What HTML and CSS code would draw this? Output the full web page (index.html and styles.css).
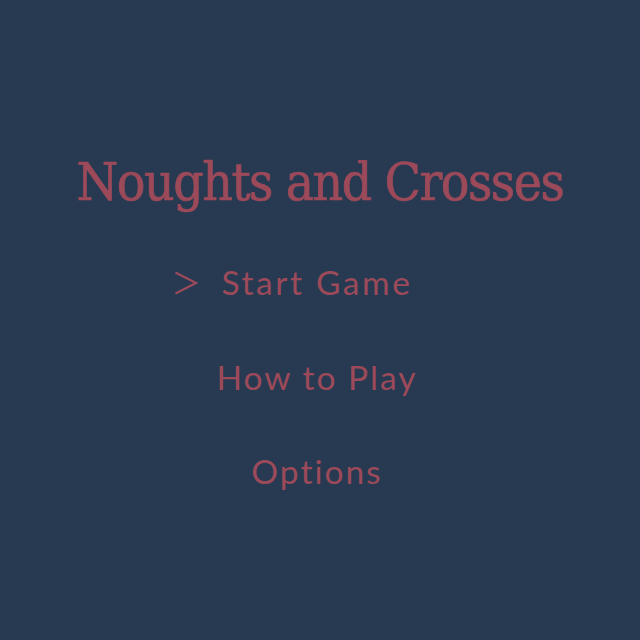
FILE: index.html
```html
<!DOCTYPE html>
<html lang="en">
<head>
    <meta charset="UTF-8">
    <meta name="viewport" content="width=device-width, initial-scale=1.0">
    <title>Noughts and Crosses</title>
    <link rel="stylesheet" href="styles.css">
</head>
<body>
    <div class="screen">
        <h1 class="title">Noughts and Crosses</h1>
        <ul class="menu">
            <li class="menu-item selected">
                <span class="cursor">
                    <svg width="24" height="24" viewBox="0 0 24 24">
                        <polyline points="1.5,1.5 22,12 1.5,22.5" fill="none" stroke="currentColor" stroke-width="2.2"/>
                    </svg>
                </span>Start Game
            </li>
            <li class="menu-item">How to Play</li>
            <li class="menu-item">Options</li>
        </ul>
    </div>
</body>
</html>
```

FILE: styles.css
```css
html, body {
    margin: 0;
    padding: 0;
}

body {
    background-color: #283a52;
    color: #9c4a5a;
    width: 640px;
    height: 640px;
    overflow: hidden;
}

.screen {
    display: flex;
    flex-direction: column;
    align-items: center;
    padding-top: 150px;
}

.title {
    font-family: "DejaVu Serif Condensed", "DejaVu Serif", serif;
    font-weight: normal;
    font-size: 53px;
    line-height: 64px;
    letter-spacing: -1.5px;
    -webkit-text-stroke: 0.7px #9c4a5a;
    margin: 0;
}

.menu {
    list-style: none;
    margin: 48px 0 0 0;
    padding: 0;
    display: flex;
    flex-direction: column;
    align-items: center;
    gap: 54.5px;
    font-family: Lato, "Open Sans", sans-serif;
    font-size: 33.5px;
    line-height: 40px;
    letter-spacing: 2px;
}

.menu-item {
    position: relative;
    margin-left: -6px;
    white-space: nowrap;
}

.menu-item.selected {
    letter-spacing: 2.6px;
}

/* chevron in front of the highlighted entry */
.cursor {
    position: absolute;
    right: 100%;
    top: 9px;
    margin-right: 23px;
    display: flex;
}
```
